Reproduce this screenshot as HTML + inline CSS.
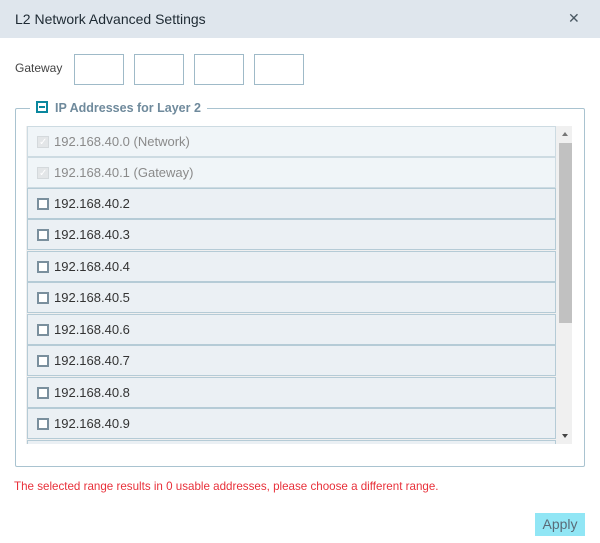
<!DOCTYPE html><html><head><style>
body{margin:0;width:600px;height:543px;background:#fff;font-family:"Liberation Sans",sans-serif;position:relative;overflow:hidden}
.hd{position:absolute;left:0;top:0;width:600px;height:38px;background:#dfe6ed}
.hd span{position:absolute;left:15px;top:11px;font-size:14px;color:#1e2a33}
.x{position:absolute;left:568px;top:10px;font-size:14px;color:#4a5862}
.gl{position:absolute;left:15px;top:61px;font-size:12px;color:#444}
.box{position:absolute;top:54px;width:48px;height:29px;border:1px solid #9fbac8}
.fs{position:absolute;left:15px;top:108px;width:568px;height:357px;border:1px solid #a9c3d0;border-radius:2px}
.lg{position:absolute;left:30px;top:100px;background:#fff;padding:0 6px;height:16px;font-size:12.5px;color:#6f8a9c;font-weight:bold;line-height:16px}
.lg i{display:inline-block;width:8px;height:8px;border:2px solid #0a879e;vertical-align:-1px;margin-right:7px;position:relative}
.lg i:after{content:"";position:absolute;left:1px;top:3px;width:6px;height:2px;background:#0a879e}
.list{position:absolute;left:26px;top:126px;width:546px;height:318px;overflow:hidden;background:#f0f0f0}
.row{position:absolute;left:1px;width:527px;height:29px;border:1px solid #b5cbd6;background:#ebf0f4;font-size:13px;color:#333;line-height:29px}
.row.d{background:#f0f5f8;color:#8a8a8a;border-color:#cddbe2}
.cb{position:absolute;left:9px;top:9px;width:8px;height:8px;border:2px solid #7a8f9d;background:#fff}
.d .cb{border:1px solid #d4d9dc;background:#e3e6e8;width:10px;height:10px;top:9px}
.d .cb:after{content:"✓";position:absolute;left:1px;top:-9px;font-size:10px;color:#fff}
.row span{position:absolute;left:26px}
.sb{position:absolute;left:558px;top:126px;width:14px;height:318px;background:#f0f0f0}
.th{position:absolute;left:1px;top:17px;width:13px;height:180px;background:#c1c1c1}
.err{position:absolute;left:14px;top:480px;font-size:11.6px;color:#e8303a}
.ap{position:absolute;left:535px;top:513px;width:50px;height:23px;background:#91e6f5;color:#5b6b78;font-size:14px;text-align:center;line-height:23px}
</style></head><body>
<div class="hd"><span>L2 Network Advanced Settings</span></div><div class="x">✕</div>
<div class="gl">Gateway</div>
<div class="box" style="left:74px"></div><div class="box" style="left:134px"></div><div class="box" style="left:194px"></div><div class="box" style="left:254px"></div>
<div class="fs"></div>
<div class="lg"><i></i>IP Addresses for Layer 2</div>
<div class="list">
<div class="row d" style="top:0"><div class="cb"></div><span>192.168.40.0 (Network)</span></div>
<div class="row d" style="top:31px"><div class="cb"></div><span>192.168.40.1 (Gateway)</span></div>
<div class="row" style="top:62px"><div class="cb"></div><span>192.168.40.2</span></div>
<div class="row" style="top:93px"><div class="cb"></div><span>192.168.40.3</span></div>
<div class="row" style="top:125px"><div class="cb"></div><span>192.168.40.4</span></div>
<div class="row" style="top:156px"><div class="cb"></div><span>192.168.40.5</span></div>
<div class="row" style="top:188px"><div class="cb"></div><span>192.168.40.6</span></div>
<div class="row" style="top:219px"><div class="cb"></div><span>192.168.40.7</span></div>
<div class="row" style="top:251px"><div class="cb"></div><span>192.168.40.8</span></div>
<div class="row" style="top:282px"><div class="cb"></div><span>192.168.40.9</span></div>
<div class="row" style="top:314px"></div>
</div>
<div class="sb"><div style="position:absolute;left:4px;top:6px;border:3px solid transparent;border-bottom:4px solid #777;border-top:0"></div><div class="th"></div><div style="position:absolute;left:4px;top:308px;border:3px solid transparent;border-top:4px solid #444;border-bottom:0"></div></div>
<div class="err">The selected range results in 0 usable addresses, please choose a different range.</div>
<div class="ap">Apply</div>
</body></html>
